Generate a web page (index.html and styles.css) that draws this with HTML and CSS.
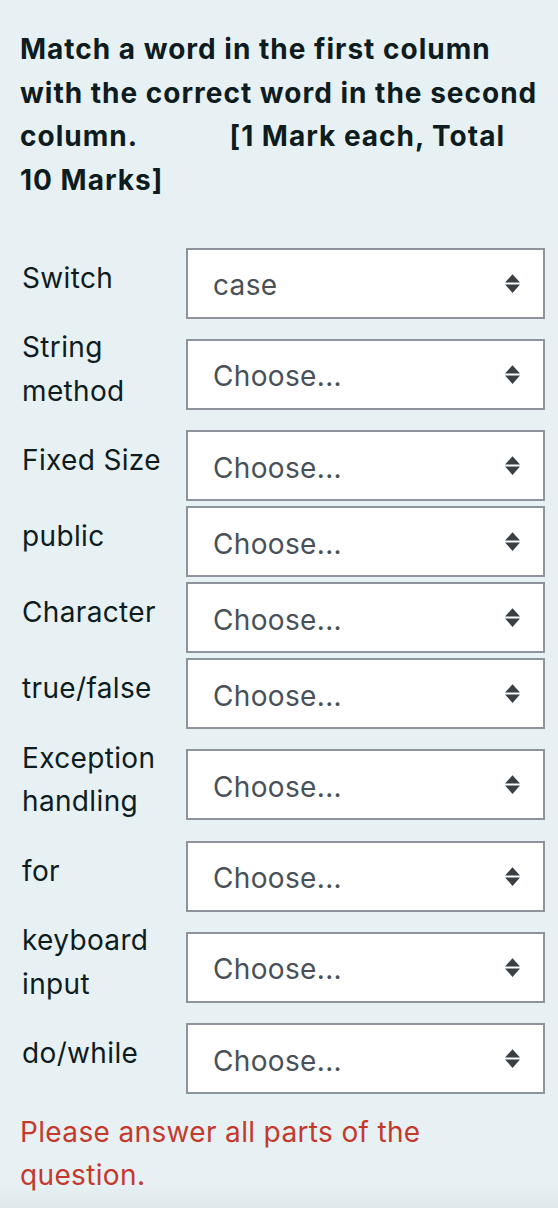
FILE: index.html
```html
<!DOCTYPE html>
<html lang="en">
<head>
<meta charset="utf-8">
<title>Match question</title>
<link rel="stylesheet" href="styles.css">
</head>
<body>
<div class="que">
  <p class="qtext">Match a word in the first column with the correct word in the second column.&nbsp;&nbsp;&nbsp;&nbsp;&nbsp;&nbsp;&nbsp;&nbsp;&nbsp;&nbsp;&nbsp; [1 Mark each, Total 10 Marks]</p>
  <div class="answer">
    <div class="row"><div class="label">Switch</div><div class="select"><span class="val">case</span><svg class="arrows" viewBox="0 0 16 20" width="15" height="19"><path d="M8 0 L16 9 L0 9 Z M0 11 L16 11 L8 20 Z" fill="#3a3f45"/></svg></div></div>
    <div class="row"><div class="label">String method</div><div class="select"><span class="val">Choose...</span><svg class="arrows" viewBox="0 0 16 20" width="15" height="19"><path d="M8 0 L16 9 L0 9 Z M0 11 L16 11 L8 20 Z" fill="#3a3f45"/></svg></div></div>
    <div class="row"><div class="label">Fixed Size</div><div class="select"><span class="val">Choose...</span><svg class="arrows" viewBox="0 0 16 20" width="15" height="19"><path d="M8 0 L16 9 L0 9 Z M0 11 L16 11 L8 20 Z" fill="#3a3f45"/></svg></div></div>
    <div class="row"><div class="label">public</div><div class="select"><span class="val">Choose...</span><svg class="arrows" viewBox="0 0 16 20" width="15" height="19"><path d="M8 0 L16 9 L0 9 Z M0 11 L16 11 L8 20 Z" fill="#3a3f45"/></svg></div></div>
    <div class="row"><div class="label">Character</div><div class="select"><span class="val">Choose...</span><svg class="arrows" viewBox="0 0 16 20" width="15" height="19"><path d="M8 0 L16 9 L0 9 Z M0 11 L16 11 L8 20 Z" fill="#3a3f45"/></svg></div></div>
    <div class="row"><div class="label">true/false</div><div class="select"><span class="val">Choose...</span><svg class="arrows" viewBox="0 0 16 20" width="15" height="19"><path d="M8 0 L16 9 L0 9 Z M0 11 L16 11 L8 20 Z" fill="#3a3f45"/></svg></div></div>
    <div class="row"><div class="label">Exception handling</div><div class="select"><span class="val">Choose...</span><svg class="arrows" viewBox="0 0 16 20" width="15" height="19"><path d="M8 0 L16 9 L0 9 Z M0 11 L16 11 L8 20 Z" fill="#3a3f45"/></svg></div></div>
    <div class="row"><div class="label">for</div><div class="select"><span class="val">Choose...</span><svg class="arrows" viewBox="0 0 16 20" width="15" height="19"><path d="M8 0 L16 9 L0 9 Z M0 11 L16 11 L8 20 Z" fill="#3a3f45"/></svg></div></div>
    <div class="row"><div class="label">keyboard input</div><div class="select"><span class="val">Choose...</span><svg class="arrows" viewBox="0 0 16 20" width="15" height="19"><path d="M8 0 L16 9 L0 9 Z M0 11 L16 11 L8 20 Z" fill="#3a3f45"/></svg></div></div>
    <div class="row"><div class="label">do/while</div><div class="select"><span class="val">Choose...</span><svg class="arrows" viewBox="0 0 16 20" width="15" height="19"><path d="M8 0 L16 9 L0 9 Z M0 11 L16 11 L8 20 Z" fill="#3a3f45"/></svg></div></div>
  </div>
  <p class="error">Please answer all parts of the question.</p>
</div>
</body>
</html>
```
FILE: styles.css
```css
html {
  background: #e7f1f4;
}
body {
  margin: 0;
  min-height: 1208px;
  font-family: Inter, "Noto Sans", sans-serif;
  font-size: 28px;
  line-height: 43.5px;
  letter-spacing: 0.35px;
  color: #0e1c20;
  background: linear-gradient(to bottom, #e7f1f4 0, #e7f1f4 1184px, #dfe7ea 1208px);
}
.que {
  padding: 28px 13px 0 20px;
}
.qtext {
  margin: 0 0 43px;
  font-weight: 700;
  letter-spacing: 1px;
}
.answer {
  display: flex;
  flex-direction: column;
}
.row {
  display: flex;
  align-items: center;
  min-height: 76px;
}
.label {
  width: 166px;
  flex: none;
  padding: 5px 6px 14.5px 2px;
  box-sizing: border-box;
}
.select {
  flex: 1;
  height: 71px;
  box-sizing: border-box;
  border: 2px solid #8f949c;
  background: #fff;
  display: flex;
  align-items: center;
  justify-content: space-between;
  padding: 4px 23px 0 25px;
  color: #495057;
}
.val {
  line-height: 1;
}
.arrows {
  display: block;
  flex: none;
  margin-top: -4px;
}
.error {
  margin: 14px 0 0;
  padding-right: 90px;
  color: #c4392b;
}
```
